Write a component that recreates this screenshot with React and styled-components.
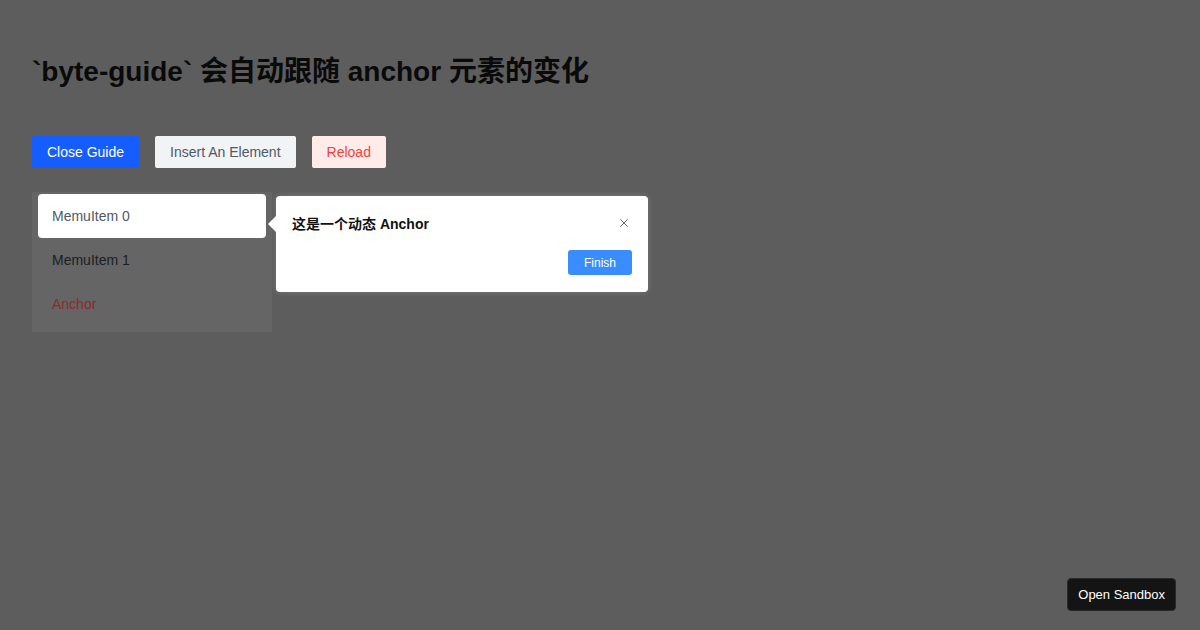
import React from "react";
import styled, { createGlobalStyle } from "styled-components";
import { X } from "lucide-react";

const GlobalStyle = createGlobalStyle`
  html, body {
    margin: 0;
    height: 100%;
    background: #5d5d5d;
    font-family: "Liberation Sans", "Noto Sans CJK SC", Arial, sans-serif;
  }
  #root {
    height: 100%;
  }
`;

const Page = styled.div`
  position: relative;
  height: 100%;
  padding: 56px 32px 0;
  box-sizing: border-box;
  overflow: hidden;
`;

const Title = styled.h1`
  margin: 0 0 48px;
  font-size: 28px;
  line-height: 32px;
  font-weight: 700;
  color: #0a0a0a;
`;

const Toolbar = styled.div`
  display: flex;
  gap: 16px;
  margin-bottom: 24px;
`;

const tones = {
  primary: { bg: "#165dff", fg: "#ffffff" },
  secondary: { bg: "#f2f3f5", fg: "#4e5969" },
  danger: { bg: "#ffece8", fg: "#f53f3f" },
};

const Button = styled.button`
  height: 32px;
  padding: 0 15px;
  border: none;
  border-radius: 2px;
  font-family: inherit;
  font-size: 14px;
  background: ${(p) => tones[p.$tone].bg};
  color: ${(p) => tones[p.$tone].fg};
`;

const Menu = styled.div`
  width: 240px;
  padding: 2px 0 6px;
  background: #656565;
`;

const MenuItem = styled.div`
  height: 44px;
  display: flex;
  align-items: center;
  padding-left: 20px;
  font-size: 14px;
  color: ${(p) => p.$color || "#1b1e23"};
  ${(p) =>
    p.$active &&
    `
    margin: 0 6px;
    padding-left: 14px;
    background: #ffffff;
    border-radius: 4px;
    color: #4e5969;
  `}
`;

const Popover = styled.div`
  position: absolute;
  left: 276px;
  top: 196px;
  width: 372px;
  box-sizing: border-box;
  padding: 16px 16px 17px;
  background: #ffffff;
  border-radius: 4px;
  box-shadow: 0 0 6px rgba(255, 255, 255, 0.18);
  &::before {
    content: "";
    position: absolute;
    left: -8px;
    top: 20px;
    border-style: solid;
    border-width: 8px 8px 8px 0;
    border-color: transparent #ffffff transparent transparent;
  }
`;

const PopoverHead = styled.div`
  display: flex;
  align-items: center;
  justify-content: space-between;
  height: 22px;
  font-size: 14px;
  font-weight: 700;
  color: #111111;
`;

const CloseIcon = styled.span`
  display: flex;
  color: #4e5969;
  margin-right: 1px;
`;

const PopoverFoot = styled.div`
  display: flex;
  justify-content: flex-end;
  margin-top: 16px;
`;

const Finish = styled.button`
  height: 25px;
  padding: 0 16px;
  border: none;
  border-radius: 3px;
  background: #3a8dff;
  color: #ffffff;
  font-family: inherit;
  font-size: 12px;
`;

const Sandbox = styled.button`
  position: absolute;
  right: 24px;
  bottom: 19px;
  height: 33px;
  padding: 0 10px;
  border: 1px solid #2a2a2a;
  border-radius: 4px;
  background: #141414;
  color: #ffffff;
  font-family: inherit;
  font-size: 13px;
`;

export default function App() {
  return (
    <>
      <GlobalStyle />
      <Page>
        <Title>`byte-guide` 会自动跟随 anchor 元素的变化</Title>
        <Toolbar>
          <Button $tone="primary">Close Guide</Button>
          <Button $tone="secondary">Insert An Element</Button>
          <Button $tone="danger">Reload</Button>
        </Toolbar>
        <Menu>
          <MenuItem $active>MemuItem 0</MenuItem>
          <MenuItem>MemuItem 1</MenuItem>
          <MenuItem $color="#8c2b2b">Anchor</MenuItem>
        </Menu>
        <Popover>
          <PopoverHead>
            <span>这是一个动态 Anchor</span>
            <CloseIcon>
              <X size={14} strokeWidth={1.5} />
            </CloseIcon>
          </PopoverHead>
          <PopoverFoot>
            <Finish>Finish</Finish>
          </PopoverFoot>
        </Popover>
        <Sandbox>Open Sandbox</Sandbox>
      </Page>
    </>
  );
}
